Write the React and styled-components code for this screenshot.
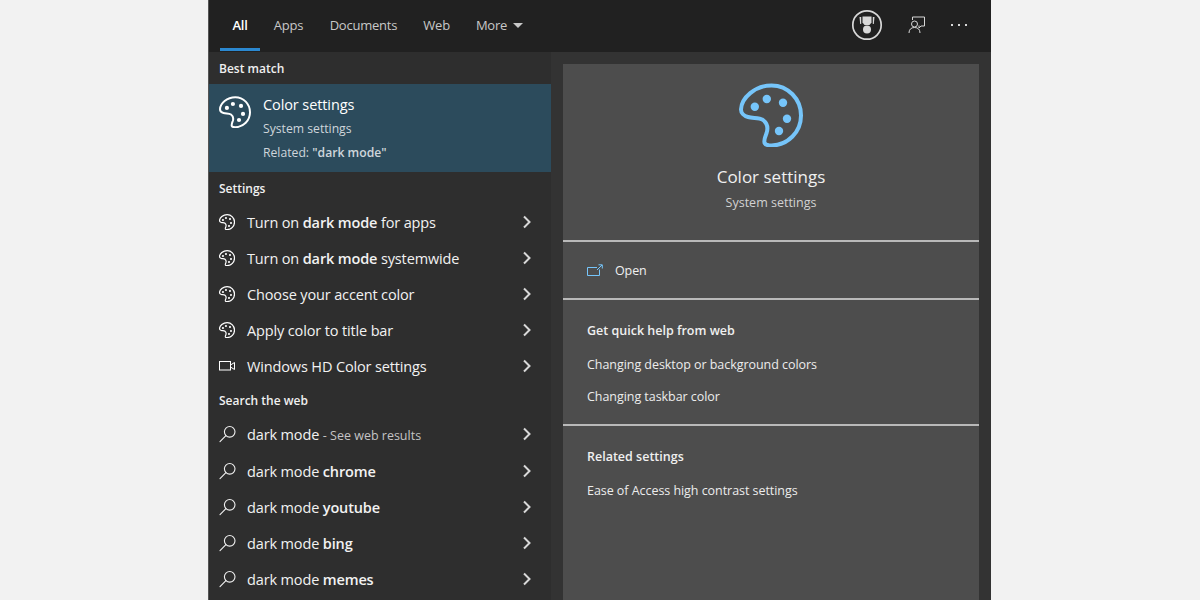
import React from "react";
import styled, { createGlobalStyle } from "styled-components";

const Global = createGlobalStyle`
  html, body { margin: 0; padding: 0; background: #f2f2f2; }
  body { font-family: "Open Sans", "Noto Sans", "Liberation Sans", sans-serif; }
`;

const Page = styled.div`
  width: 1200px;
  height: 600px;
  display: flex;
  justify-content: center;
  overflow: hidden;
`;

const Window = styled.div`
  width: 782px;
  height: 600px;
  display: flex;
  flex-direction: column;
  background: #333333;
  overflow: hidden;
  box-shadow: -1px 0 0 #555;
`;

const TopBar = styled.div`
  height: 52px;
  flex: none;
  background: #212121;
  display: flex;
  align-items: stretch;
  justify-content: space-between;
`;

const Tabs = styled.div`
  display: flex;
  padding-left: 11px;
`;

const Tab = styled.div`
  display: flex;
  align-items: center;
  gap: 6px;
  padding: 2px ${(p) => p.$pad}px 0;
  height: 51px;
  box-sizing: border-box;
  font-size: 13px;
  letter-spacing: -0.22px;
  font-weight: ${(p) => (p.$active ? 600 : 400)};
  color: ${(p) => (p.$active ? "#ffffff" : "#c8c8c8")};
  border-bottom: 3px solid ${(p) => (p.$active ? "#2b88d0" : "transparent")};
`;

const Caret = styled.span`
  width: 0;
  height: 0;
  border-left: 5px solid transparent;
  border-right: 5px solid transparent;
  border-top: 5px solid #c8c8c8;
`;

const Actions = styled.div`
  display: flex;
  align-items: center;
  padding: 0 24px 2px 0;
  gap: 25px;
  color: #d8d8d8;
`;

const Body = styled.div`
  flex: 1;
  display: flex;
  min-height: 0;
`;

const Results = styled.div`
  width: 342px;
  flex: none;
  background: #2e2e2e;
  padding-top: 6px;
`;

const SectionLabel = styled.div`
  height: ${(p) => p.$h || 21}px;
  margin-bottom: ${(p) => p.$after || 0}px;
  padding-left: 10px;
  display: flex;
  align-items: center;
  font-size: 12px;
  font-weight: 600;
  color: #f0f0f0;
`;

const BestMatch = styled.div`
  height: 88px;
  margin-top: 5px;
  background: #2c4b5c;
  display: flex;
  padding: 12px 0 0 10px;
  box-sizing: border-box;
  color: #ffffff;
`;

const BestText = styled.div`
  margin-left: 12px;
  display: flex;
  flex-direction: column;
`;

const BestTitle = styled.div`
  font-size: 14.5px;
  line-height: 18px;
  letter-spacing: -0.1px;
  margin-bottom: 3px;
`;

const BestSub = styled.div`
  font-size: 12.2px;
  line-height: 24px;
  color: #cfd6db;
  b {
    font-weight: 600;
  }
`;

const Group = styled.div`
  padding-top: ${(p) => p.$top || 0}px;
`;

const Row = styled.div`
  height: 36px;
  margin-bottom: ${(p) => p.$after || 0}px;
  display: flex;
  align-items: center;
  padding: 0 19px 0 10px;
  color: #f2f2f2;
  font-size: 14.5px;
  letter-spacing: -0.14px;
`;

const RowIcon = styled.span`
  width: 18px;
  height: 18px;
  flex: none;
  display: flex;
  align-items: center;
  margin-right: 10px;
`;

const RowLabel = styled.span`
  flex: 1;
  white-space: pre;
  b {
    font-weight: 600;
  }
`;

const Hint = styled.span`
  font-size: 12.5px;
  letter-spacing: 0;
  color: #c4c4c4;
`;

const Preview = styled.div`
  margin: 12px 12px 0;
  flex: 1;
  background: #4d4d4d;
  color: #f0f0f0;
`;

const Hero = styled.div`
  height: 178px;
  display: flex;
  flex-direction: column;
  align-items: center;
  padding-top: 19px;
  box-sizing: border-box;
  border-bottom: 2px solid #b9b9b9;
`;

const HeroTitle = styled.div`
  font-size: 17px;
  line-height: 24px;
  margin-top: 18px;
`;

const HeroSub = styled.div`
  font-size: 12.5px;
  line-height: 20px;
  color: #d2d2d2;
  margin-top: 4px;
`;

const OpenRow = styled.div`
  height: 56px;
  display: flex;
  align-items: center;
  padding-left: 24px;
  gap: 12px;
  font-size: 12.5px;
  letter-spacing: -0.1px;
  border-bottom: 2px solid #b9b9b9;
`;

const InfoBlock = styled.div`
  padding: ${(p) => p.$top}px 24px 0;
  height: ${(p) => p.$h}px;
  box-sizing: border-box;
  border-bottom: ${(p) => (p.$line ? "2px solid #b9b9b9" : "none")};
`;

const InfoTitle = styled.div`
  font-size: 12.5px;
  font-weight: 600;
  line-height: 18px;
  margin-bottom: 9px;
`;

const InfoLink = styled.div`
  font-size: 12.5px;
  line-height: 32px;
  letter-spacing: -0.05px;
  color: #ececec;
`;

const Palette = ({ size = 16, color = "#fff", stroke = 1.2 }) => (
  <svg width={size} height={size} viewBox="0 0 32 32" fill="none">
    <path
      d="M16.3 1.2C8 1.2 1.2 7.5 1 13.2C1 15 2.5 16.5 4.5 17C7 17.8 10 17 12 18.5C14 20 14.6 22.5 13.8 25C13 27 12.3 28.5 12.8 30C13.3 31 14.5 31.3 16.3 31.3C24.5 31 31 24.5 31 16.2C31 8 24.5 1.2 16.3 1.2Z"
      stroke={color}
      strokeWidth={stroke * (32 / size)}
      strokeLinejoin="round"
    />
    <circle cx="7.9" cy="11.9" r="2.1" fill={color} />
    <circle cx="13.9" cy="8" r="2.1" fill={color} />
    <circle cx="22" cy="9.9" r="2.1" fill={color} />
    <circle cx="24" cy="17.9" r="2.1" fill={color} />
    <circle cx="20" cy="24" r="2.1" fill={color} />
  </svg>
);

const Camera = () => (
  <svg width="16" height="12" viewBox="0 0 16 12" fill="none" stroke="#fff" strokeWidth="1">
    <rect x="0.5" y="1.5" width="11" height="8.5" />
    <path d="M11.5 5L15.5 2.5V9.5L11.5 7" />
  </svg>
);

const Search = () => (
  <svg width="18" height="18" viewBox="0 0 18 18" fill="none" stroke="#f0f0f0" strokeWidth="1.1">
    <circle cx="10.7" cy="6.8" r="5.3" />
    <path d="M6.9 10.6L1 16.6" strokeLinecap="round" />
  </svg>
);

const Chevron = () => (
  <svg width="10" height="14" viewBox="0 0 10 14" fill="none" stroke="#d8d8d8" strokeWidth="2">
    <path d="M2 1.5L7.5 7L2 12.5" />
  </svg>
);

const Trophy = () => (
  <svg width="32" height="32" viewBox="0 0 32 32" fill="none">
    <circle cx="16" cy="16" r="14.2" stroke="#d8d8d8" strokeWidth="1.7" />
    <path d="M8.5 8H10.2V15H9.2ZM23.5 8H21.8V15H22.8Z" fill="#d8d8d8" />
    <path d="M11.5 7.5H20.5V13.5L18.5 16H13.5L11.5 13.5Z" fill="#d8d8d8" />
    <circle cx="16" cy="20.5" r="4" fill="#d8d8d8" />
  </svg>
);

const Feedback = () => (
  <svg width="18" height="18" viewBox="0 0 18 18" fill="none" stroke="#d8d8d8" strokeWidth="1">
    <path d="M4.5 4V1H16.5V10H13L11 12V9.5" />
    <circle cx="6.5" cy="8" r="3" />
    <path d="M1 17C1 13.5 3 11.5 6.5 11.5C10 11.5 12 13.5 12 17" />
  </svg>
);

const Dots = () => (
  <svg width="16" height="4" viewBox="0 0 16 4" fill="#d8d8d8">
    <rect x="0" y="1" width="2" height="2" />
    <rect x="7" y="1" width="2" height="2" />
    <rect x="14" y="1" width="2" height="2" />
  </svg>
);

const OpenIcon = () => (
  <svg width="16" height="13" viewBox="0 0 16 13" fill="none" stroke="#76c5fa" strokeWidth="1">
    <path d="M12.5 5.5V11.5H0.5V3.5H10" />
    <path d="M10 6L15 1M11.5 0.8H15.3V4.5" />
  </svg>
);

const settingsRows = [
  { icon: <Palette />, text: <>Turn on <b>dark mode</b> for apps</> },
  { icon: <Palette />, text: <>Turn on <b>dark mode</b> systemwide</> },
  { icon: <Palette />, text: "Choose your accent color" },
  { icon: <Palette />, text: "Apply color to title bar" },
  { icon: <Camera />, text: "Windows HD Color settings" },
];

const webRows = [
  <>dark mode <Hint>- See web results</Hint></>,
  <>dark mode <b>chrome</b></>,
  <>dark mode <b>youtube</b></>,
  <>dark mode <b>bing</b></>,
  <>dark mode <b>memes</b></>,
];

export default function App() {
  return (
    <Page>
      <Global />
      <Window>
        <TopBar>
          <Tabs>
            <Tab $active $pad={12.5}>All</Tab>
            <Tab $pad={13.5}>Apps</Tab>
            <Tab $pad={13}>Documents</Tab>
            <Tab $pad={13}>Web</Tab>
            <Tab $pad={13}>More <Caret /></Tab>
          </Tabs>
          <Actions>
            <Trophy />
            <Feedback />
            <Dots />
          </Actions>
        </TopBar>
        <Body>
          <Results>
            <SectionLabel>Best match</SectionLabel>
            <BestMatch>
              <Palette size={32} stroke={2} />
              <BestText>
                <BestTitle>Color settings</BestTitle>
                <BestSub>System settings</BestSub>
                <BestSub>Related: <b>"dark mode"</b></BestSub>
              </BestText>
            </BestMatch>
            <Group $top={6}>
              <SectionLabel $after={5}>Settings</SectionLabel>
              {settingsRows.map((row, i) => (
                <Row key={i}>
                  <RowIcon>{row.icon}</RowIcon>
                  <RowLabel>{row.text}</RowLabel>
                  <Chevron />
                </Row>
              ))}
            </Group>
            <Group>
              <SectionLabel $h={32}>Search the web</SectionLabel>
              {webRows.map((text, i) => (
                <Row key={i} $after={i === 0 ? 1 : 0}>
                  <RowIcon><Search /></RowIcon>
                  <RowLabel>{text}</RowLabel>
                  <Chevron />
                </Row>
              ))}
            </Group>
          </Results>
          <Preview>
            <Hero>
              <Palette size={64} color="#76c5fa" stroke={4} />
              <HeroTitle>Color settings</HeroTitle>
              <HeroSub>System settings</HeroSub>
            </Hero>
            <OpenRow>
              <OpenIcon />
              <span>Open</span>
            </OpenRow>
            <InfoBlock $top={22} $h={126} $line>
              <InfoTitle>Get quick help from web</InfoTitle>
              <InfoLink>Changing desktop or background colors</InfoLink>
              <InfoLink>Changing taskbar color</InfoLink>
            </InfoBlock>
            <InfoBlock $top={22} $h={100}>
              <InfoTitle>Related settings</InfoTitle>
              <InfoLink>Ease of Access high contrast settings</InfoLink>
            </InfoBlock>
          </Preview>
        </Body>
      </Window>
    </Page>
  );
}
